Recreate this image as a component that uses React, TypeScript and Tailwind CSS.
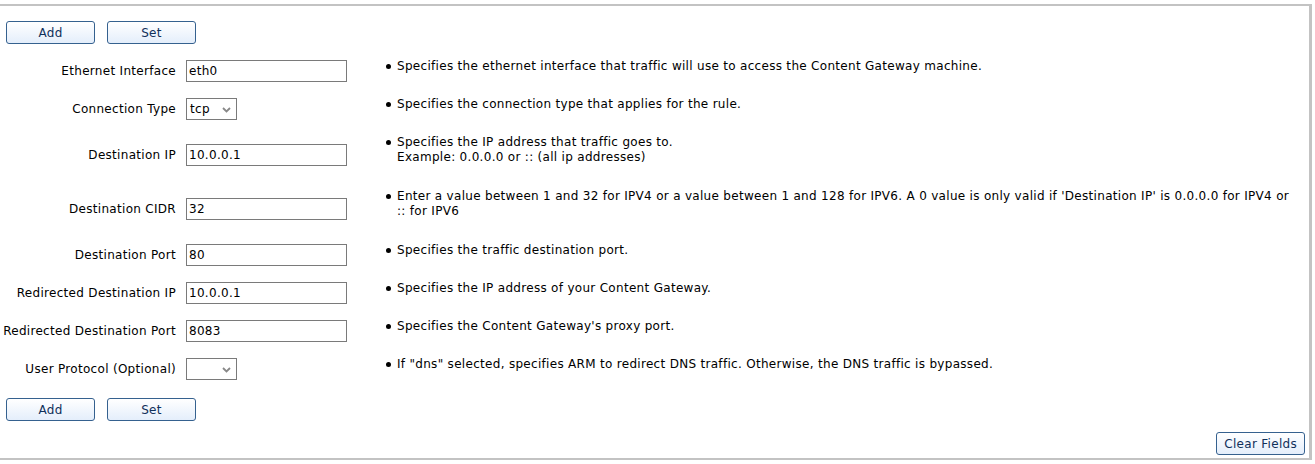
import React from "react";

const font = "font-['DejaVu_Sans',Verdana,sans-serif] tracking-[0.3px]";

function Btn({ label, className = "" }: { label: string; className?: string }) {
  return (
    <button
      className={`h-[23px] rounded-[3px] border border-[#35618f] bg-gradient-to-b from-white to-[#e4eefb] text-[12px] tracking-[0.3px] text-[#10305a] ${className}`}
    >
      {label}
    </button>
  );
}

function TextBox({ value }: { value: string }) {
  return (
    <input
      readOnly
      value={value}
      className="h-[22px] w-[161px] border border-[#7a7a7a] bg-white px-[2px] text-[12px] tracking-[0.3px] text-black outline-none"
    />
  );
}

function Select({ value, width }: { value: string; width: string }) {
  return (
    <div className={`relative flex h-[22px] items-center border border-[#7a7a7a] bg-white pl-[3px] text-[12px] text-black ${width}`}>
      <span>{value}</span>
      <svg className="absolute right-[5px] top-[8px]" width="9" height="6" viewBox="0 0 9 6">
        <path d="M1 1 L4.5 4.5 L8 1" fill="none" stroke="#888" strokeWidth="1.8" />
      </svg>
    </div>
  );
}

type Row = {
  label: string;
  field: React.ReactNode;
  desc: React.ReactNode;
  tall?: boolean;
};

const rows: Row[] = [
  {
    label: "Ethernet Interface",
    field: <TextBox value="eth0" />,
    desc: "Specifies the ethernet interface that traffic will use to access the Content Gateway machine.",
  },
  {
    label: "Connection Type",
    field: <Select value="tcp" width="w-[51px]" />,
    desc: "Specifies the connection type that applies for the rule.",
  },
  {
    label: "Destination IP",
    field: <TextBox value="10.0.0.1" />,
    desc: (
      <>
        Specifies the IP address that traffic goes to.
        <br />
        Example: 0.0.0.0 or :: (all ip addresses)
      </>
    ),
    tall: true,
  },
  {
    label: "Destination CIDR",
    field: <TextBox value="32" />,
    desc: "Enter a value between 1 and 32 for IPV4 or a value between 1 and 128 for IPV6. A 0 value is only valid if 'Destination IP' is 0.0.0.0 for IPV4 or :: for IPV6",
    tall: true,
  },
  {
    label: "Destination Port",
    field: <TextBox value="80" />,
    desc: "Specifies the traffic destination port.",
  },
  {
    label: "Redirected Destination IP",
    field: <TextBox value="10.0.0.1" />,
    desc: "Specifies the IP address of your Content Gateway.",
  },
  {
    label: "Redirected Destination Port",
    field: <TextBox value="8083" />,
    desc: "Specifies the Content Gateway's proxy port.",
  },
  {
    label: "User Protocol (Optional)",
    field: <Select value="" width="w-[51px]" />,
    desc: "If \"dns\" selected, specifies ARM to redirect DNS traffic. Otherwise, the DNS traffic is bypassed.",
  },
];

export default function App() {
  return (
    <div className={`h-[464px] w-[1315px] bg-white pt-[4px] ${font} text-[12px] text-black`}>
      <div className="flex h-[456px] w-[1312px] flex-col border-t-[2px] border-r-[3px] border-b-[2px] border-[#c3c3c3] pt-[15px]">
        <div className="flex gap-[12px] pl-[6px]">
          <Btn label="Add" className="w-[89px]" />
          <Btn label="Set" className="w-[89px]" />
        </div>
        <table className="mt-[8px] border-collapse">
          <tbody>
            {rows.map((r) => (
              <tr key={r.label} className={r.tall ? "h-[54px]" : "h-[38px]"}>
                <td className="w-[186px] whitespace-nowrap pr-[10px] text-right align-middle">{r.label}</td>
                <td className="w-[200px] align-middle">{r.field}</td>
                <td className="pr-[14px] align-middle">
                  <div className="mb-[10px] flex leading-[15px]">
                    <span className="mr-[6px] mt-[5px] h-[5px] w-[5px] shrink-0 rounded-full bg-black" />
                    <div>{r.desc}</div>
                  </div>
                </td>
              </tr>
            ))}
          </tbody>
        </table>
        <div className="mt-[10px] flex gap-[12px] pl-[6px]">
          <Btn label="Add" className="w-[89px]" />
          <Btn label="Set" className="w-[89px]" />
        </div>
        <div className="mt-auto flex justify-end pb-[3px] pr-[4px]">
          <Btn label="Clear Fields" className="px-[7px]" />
        </div>
      </div>
    </div>
  );
}
